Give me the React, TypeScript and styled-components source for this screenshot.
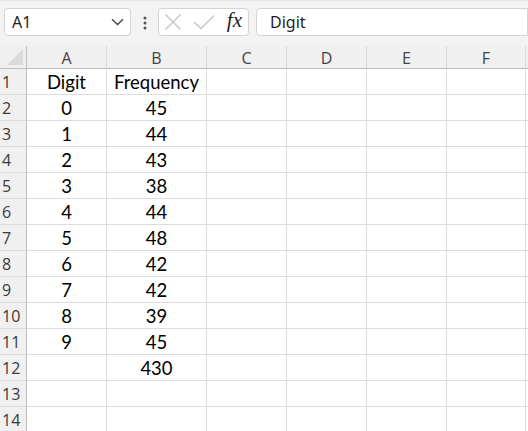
import { Fragment } from 'react';
import type { FC } from 'react';
import styled, { createGlobalStyle } from 'styled-components';

const GlobalStyle = createGlobalStyle`
  html, body {
    margin: 0;
    padding: 0;
    background: #f3f3f3;
    overflow: hidden;
  }
  * {
    box-sizing: border-box;
  }
`;

const columns = ['A', 'B', 'C', 'D', 'E', 'F'];
const colWidths = [80, 100, 80, 80, 80, 79];

const data: [string, string][] = [
  ['Digit', 'Frequency'],
  ['0', '45'],
  ['1', '44'],
  ['2', '43'],
  ['3', '38'],
  ['4', '44'],
  ['5', '48'],
  ['6', '42'],
  ['7', '42'],
  ['8', '39'],
  ['9', '45'],
  ['', '430'],
  ['', ''],
  ['', ''],
];

const Page = styled.div`
  width: 528px;
  height: 431px;
  overflow: hidden;
  font-family: Lato, 'Open Sans', sans-serif;
`;

const Toolbar = styled.div`
  height: 46px;
  display: flex;
  align-items: flex-start;
  padding: 8px 0 0 4px;
  background: #f3f3f3;
  border-top: 1px solid #e6e6e6;
`;

const Box = styled.div<{ $width?: number; $grow?: boolean }>`
  height: 28px;
  margin-top: -1px;
  ${({ $width }) => ($width ? `width: ${$width}px;` : '')}
  ${({ $grow }) => ($grow ? 'flex: 1; border-right: none; border-radius: 4px 0 0 4px;' : 'border-radius: 4px;')}
  background: #ffffff;
  border: 1px solid #d4d4d4;
  display: flex;
  align-items: center;
`;

const NameBox = styled(Box)`
  justify-content: space-between;
  padding: 0 6px 0 7px;
  font-family: 'Noto Sans', 'Open Sans', sans-serif;
  font-size: 16px;
  color: #1f1f1f;
`;

const Dots = styled.div`
  width: 27px;
  height: 28px;
  display: flex;
  align-items: center;
  justify-content: center;
`;

const FormulaButtons = styled(Box)`
  padding: 0 6px 0 5px;
  justify-content: space-between;
  margin-right: 7px;
`;

const FxLabel = styled.span`
  font-family: 'Liberation Serif', 'DejaVu Serif', serif;
  font-style: italic;
  font-size: 21px;
  color: #222;
  letter-spacing: 0px;
  margin-top: -3px;
`;

const FormulaInput = styled(Box)`
  padding-left: 13px;
  font-family: 'Noto Sans', 'Open Sans', sans-serif;
  font-size: 16px;
  color: #1f1f1f;
`;

const Grid = styled.div`
  display: grid;
  grid-template-columns: 27px ${colWidths.map((w) => `${w}px`).join(' ')} 1fr;
  grid-auto-rows: 26px;
  grid-template-rows: 23px;
  background: #ffffff;
`;

const Corner = styled.div`
  background: #f0f0f0;
  border-right: 1px solid #bdbdbd;
  border-bottom: 1px solid #bdbdbd;
  position: relative;
`;

const CornerTriangle = styled.div`
  position: absolute;
  right: 3px;
  bottom: 3px;
  width: 0;
  height: 0;
  border-left: 16px solid transparent;
  border-bottom: 16px solid #dadada;
`;

const ColHeader = styled.div<{ $last?: boolean }>`
  background: #f0f0f0;
  border-bottom: 1px solid #bdbdbd;
  border-right: ${({ $last }) => ($last ? 'none' : '1px solid #dadada')};
  display: flex;
  align-items: center;
  justify-content: center;
  font-family: 'Open Sans', sans-serif;
  font-size: 16px;
  color: #444;
  padding-top: 1px;
`;

const RowHeader = styled.div`
  background: #f0f0f0;
  border-right: 1px solid #bdbdbd;
  border-bottom: 1px solid #dadada;
  display: flex;
  align-items: center;
  padding-left: 2px;
  font-family: 'Open Sans', sans-serif;
  font-size: 16px;
  color: #3a3a3a;
`;

const Cell = styled.div<{ $last?: boolean }>`
  border-right: ${({ $last }) => ($last ? 'none' : '1px solid #dcdcdc')};
  border-bottom: 1px solid #dcdcdc;
  display: flex;
  align-items: center;
  justify-content: center;
  font-size: 18.5px;
  color: #000;
  white-space: nowrap;
`;

const Chevron: FC = () => (
  <svg width="13" height="8" viewBox="0 0 13 8">
    <path d="M1 1.2 L6.5 6.5 L12 1.2" fill="none" stroke="#444" strokeWidth="1.4" />
  </svg>
);

const VDots: FC = () => (
  <svg width="4" height="14" viewBox="0 0 4 14">
    <circle cx="2" cy="2" r="1.5" fill="#555" />
    <circle cx="2" cy="7" r="1.5" fill="#555" />
    <circle cx="2" cy="12" r="1.5" fill="#555" />
  </svg>
);

const CrossIcon: FC = () => (
  <svg width="18" height="18" viewBox="0 0 18 18">
    <path d="M1.5 1.5 L16.5 16.5 M16.5 1.5 L1.5 16.5" stroke="#c4c4c4" strokeWidth="1.4" />
  </svg>
);

const CheckIcon: FC = () => (
  <svg width="22" height="16" viewBox="0 0 22 16">
    <path d="M1 8 L8 14.5 L21 1.5" fill="none" stroke="#c4c4c4" strokeWidth="1.4" />
  </svg>
);

const App: FC = () => {
  return (
    <Page>
      <GlobalStyle />
      <Toolbar>
        <NameBox $width={127}>
          <span>A1</span>
          <Chevron />
        </NameBox>
        <Dots>
          <VDots />
        </Dots>
        <FormulaButtons $width={91}>
          <CrossIcon />
          <CheckIcon />
          <FxLabel>fx</FxLabel>
        </FormulaButtons>
        <FormulaInput $grow>Digit</FormulaInput>
      </Toolbar>
      <Grid>
        <Corner>
          <CornerTriangle />
        </Corner>
        {columns.map((c) => (
          <ColHeader key={c}>{c}</ColHeader>
        ))}
        <ColHeader $last />
        {data.map((row, i) => (
          <Fragment key={i}>
            <RowHeader>{i + 1}</RowHeader>
            <Cell>{row[0]}</Cell>
            <Cell>{row[1]}</Cell>
            {[2, 3, 4, 5].map((c) => (
              <Cell key={c} />
            ))}
            <Cell $last />
          </Fragment>
        ))}
      </Grid>
    </Page>
  );
};

export default App;
